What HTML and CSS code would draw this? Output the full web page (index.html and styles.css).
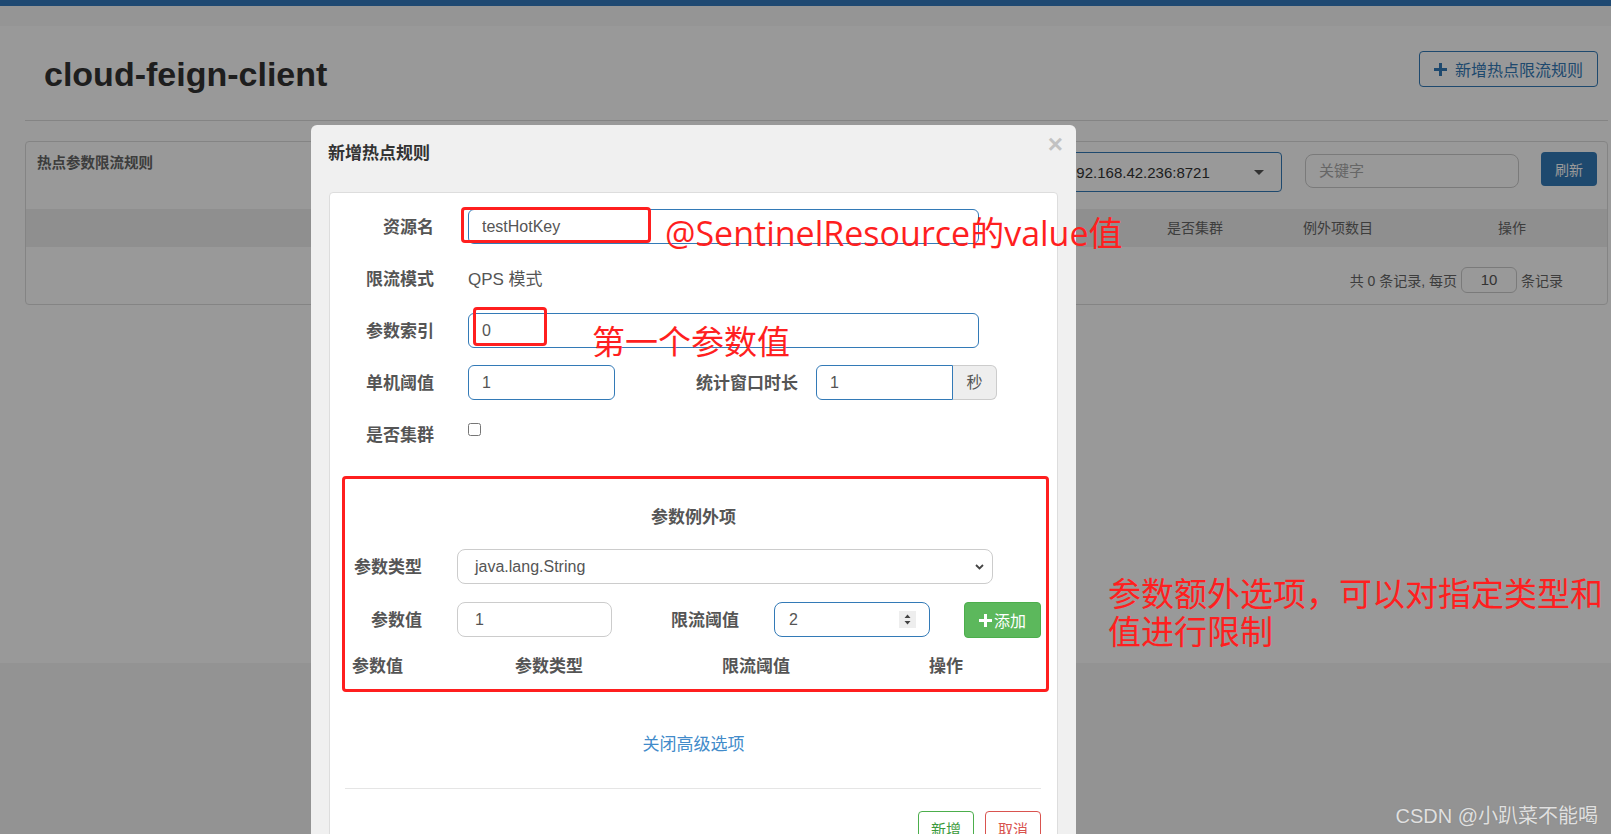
FILE: index.html
```html
<!DOCTYPE html>
<html lang="zh-CN">
<head>
    <meta charset="UTF-8">
    <title>热点参数限流规则</title>
    <link rel="stylesheet" href="styles.css">
</head>
<body>
    <div class="topbar"></div>
    <div class="subbar"></div>

    <div class="main">
        <div class="page-header">
            <h1>cloud-feign-client</h1>
            <button class="btn-add-rule">
                <svg class="icon-plus" viewBox="0 0 13 13"><path d="M5 0h3v5h5v3H8v5H5V8H0V5h5z"/></svg>
                新增热点限流规则
            </button>
        </div>

        <div class="card">
            <div class="card-head">
                <span class="card-title">热点参数限流规则</span>
                <div class="tools">
                    <div class="machine-select">
                        <span>192.168.42.236:8721</span>
                        <span class="caret"></span>
                    </div>
                    <div class="keyword">关键字</div>
                    <button class="btn-refresh">刷新</button>
                </div>
            </div>
            <div class="table-head">
                <span></span>
                <span>是否集群</span>
                <span>例外项数目</span>
                <span>操作</span>
            </div>
            <div class="pager">
                共 0 条记录, 每页 <span class="page-size">10</span> 条记录
            </div>
        </div>
    </div>
    <div class="footer"></div>

    <div class="backdrop"></div>

    <div class="modal">
        <div class="modal-header">
            <span class="modal-title">新增热点规则</span>
            <span class="close">×</span>
        </div>
        <div class="modal-body">
            <div class="form-row">
                <label class="form-label">资源名</label>
                <input class="form-input wide" value="testHotKey">
            </div>
            <div class="form-row">
                <label class="form-label">限流模式</label>
                <span class="form-text">QPS 模式</span>
            </div>
            <div class="form-row">
                <label class="form-label">参数索引</label>
                <input class="form-input wide" value="0">
            </div>
            <div class="form-row">
                <label class="form-label">单机阈值</label>
                <input class="form-input short" value="1">
                <label class="form-label inline">统计窗口时长</label>
                <div class="input-group">
                    <input class="form-input" value="1">
                    <span class="addon">秒</span>
                </div>
            </div>
            <div class="form-row last">
                <label class="form-label">是否集群</label>
                <input type="checkbox" class="check">
            </div>

            <div class="exception">
                <div class="exception-title">参数例外项</div>
                <div class="ex-row">
                    <label class="ex-label">参数类型</label>
                    <div class="ex-select">
                        <span>java.lang.String</span>
                        <svg width="9" height="6" viewBox="0 0 9 6"><path d="M1 1l3.5 3.5L8 1" fill="none" stroke="#444" stroke-width="1.8"/></svg>
                    </div>
                </div>
                <div class="ex-row">
                    <label class="ex-label">参数值</label>
                    <input class="ex-input" value="1">
                    <label class="ex-label second">限流阈值</label>
                    <div class="number-input">
                        <span>2</span>
                        <svg class="spinner" viewBox="0 0 17 17"><path d="M8.5 3.5l3 3.5h-6zM5.5 10h6l-3 3.5z" fill="#444"/></svg>
                    </div>
                    <button class="btn-add">
                        <svg class="icon-plus" viewBox="0 0 13 13"><path d="M5 0h3v5h5v3H8v5H5V8H0V5h5z"/></svg>添加
                    </button>
                </div>
                <div class="ex-table-head">
                    <span>参数值</span>
                    <span>参数类型</span>
                    <span>限流阈值</span>
                    <span>操作</span>
                </div>
            </div>

            <div class="toggle-advanced">关闭高级选项</div>

            <div class="modal-footer">
                <button class="btn-save">新增</button>
                <button class="btn-cancel">取消</button>
            </div>
        </div>
    </div>

    <!-- 截图上的红色标注 -->
    <div class="mark mark-resource"></div>
    <div class="mark mark-index"></div>
    <div class="mark mark-exception"></div>
    <div class="note note-resource">@SentinelResource的value值</div>
    <div class="note note-index">第一个参数值</div>
    <div class="note note-exception">
        <div>参数额外选项，可以对指定类型和</div>
        <div>值进行限制</div>
    </div>
    <div class="watermark">CSDN @小趴菜不能喝</div>
</body>
</html>
```

FILE: styles.css
```css
* {
    box-sizing: border-box;
}

html, body {
    margin: 0;
    height: 100%;
}

body {
    font-family: "Liberation Sans", "Noto Sans CJK SC", sans-serif;
    font-size: 14px;
    color: #333;
    background: #f5f5f5;
    position: relative;
    overflow: hidden;
    display: flex;
    flex-direction: column;
}

input, button {
    font-family: inherit;
}

.topbar {
    height: 6px;
    flex-shrink: 0;
    background: #347bbe;
}

.subbar {
    height: 20px;
    flex-shrink: 0;
    background: #f8f8f8;
}

.main {
    height: 637px;
    flex-shrink: 0;
    background: #fff;
    padding: 0 3px 0 25px;
}

.footer {
    flex: 1;
    background: #f5f5f5;
}

/* 页面头部 */
.page-header {
    display: flex;
    justify-content: space-between;
    align-items: flex-start;
    height: 95px;
    padding: 25px 10px 0 19px;
    border-bottom: 1px solid #ddd;
}

h1 {
    margin: 3px 0 0;
    font-size: 34px;
    line-height: 40px;
    font-weight: bold;
    color: #333;
}

.btn-add-rule {
    display: flex;
    align-items: center;
    gap: 8px;
    height: 36px;
    padding: 0 14px;
    background: #fff;
    border: 1px solid #337ab7;
    border-radius: 4px;
    color: #337ab7;
    font-size: 16px;
}

.icon-plus {
    width: 13px;
    height: 13px;
    fill: currentColor;
}

/* 规则列表卡片 */
.card {
    margin-top: 20px;
    height: 164px;
    border: 1px solid #ddd;
    border-radius: 4px;
}

.card-head {
    display: flex;
    justify-content: space-between;
    height: 67px;
    padding: 10px 10px 0 11px;
}

.card-title {
    margin-top: 1px;
    font-size: 14.5px;
    line-height: 20px;
    font-weight: bold;
    color: #666;
}

.tools {
    display: flex;
    align-items: flex-start;
}

.machine-select {
    display: flex;
    justify-content: space-between;
    align-items: center;
    width: 226px;
    height: 40px;
    padding: 0 17px 0 11px;
    border: 1px solid #337ab7;
    border-radius: 4px;
    font-size: 15px;
    color: #333;
}

.caret {
    border-top: 5px solid #555;
    border-left: 5px solid transparent;
    border-right: 5px solid transparent;
}

.keyword {
    width: 214px;
    height: 34px;
    margin: 2px 0 0 23px;
    padding-left: 13px;
    border: 1px solid #ccc;
    border-radius: 8px;
    font-size: 15px;
    line-height: 32px;
    color: #aaa;
}

.btn-refresh {
    width: 56px;
    height: 34px;
    margin-left: 22px;
    background: #337ab7;
    border: none;
    border-radius: 4px;
    color: #fff;
    font-size: 14px;
}

.table-head {
    display: grid;
    grid-template-columns: 1133px 136px 195px 1fr;
    height: 38px;
    background: #eee;
    line-height: 38px;
    color: #666;
}

.table-head span {
    padding-left: 8px;
}

.pager {
    display: flex;
    justify-content: flex-end;
    align-items: center;
    padding: 20px 44px 0 0;
    color: #666;
}

.page-size {
    width: 56px;
    height: 26px;
    margin: 0 4px;
    border: 1px solid #ccc;
    border-radius: 6px;
    text-align: center;
    font-size: 15px;
    line-height: 24px;
    color: #555;
}

.backdrop {
    position: absolute;
    inset: 0;
    z-index: 10;
    background: rgba(0, 0, 0, 0.4);
}

/* 弹窗 */
.modal {
    position: absolute;
    left: 311px;
    top: 125px;
    z-index: 20;
    width: 765px;
    height: 740px;
    background: #f0f0f0;
    border-radius: 6px;
}

.modal-header {
    display: flex;
    justify-content: space-between;
    align-items: flex-start;
    height: 67px;
    padding: 17px 13px 0 17px;
}

.modal-title {
    font-size: 17px;
    line-height: 24px;
    font-weight: bold;
    color: #333;
}

.close {
    margin-top: -11px;
    font-size: 26px;
    line-height: 26px;
    font-weight: bold;
    color: #c2c2c2;
}

.modal-body {
    height: 673px;
    margin: 0 18px;
    padding-top: 16px;
    background: #fff;
    border: 1px solid #ddd;
    border-radius: 4px;
}

.form-row {
    display: flex;
    align-items: flex-start;
    height: 35px;
    margin-bottom: 17px;
}

.form-label {
    width: 104px;
    margin-right: 34px;
    padding-top: 7px;
    text-align: right;
    font-size: 17px;
    line-height: 24px;
    font-weight: bold;
    color: #555;
}

.form-label.inline {
    width: 183px;
    margin-right: 18px;
}

.form-text {
    padding-top: 7px;
    font-size: 17px;
    line-height: 24px;
    color: #555;
}

.form-input {
    height: 35px;
    padding: 0 13px;
    border: 1px solid #337ab7;
    border-radius: 6px;
    font-size: 16px;
    color: #555;
    outline: none;
}

.form-input.wide {
    width: 511px;
}

.form-input.short {
    width: 147px;
}

.input-group {
    display: flex;
}

.input-group .form-input {
    width: 137px;
    border-radius: 6px 0 0 6px;
}

.addon {
    width: 44px;
    height: 35px;
    background: #eee;
    border: 1px solid #ccc;
    border-left: none;
    border-radius: 0 6px 6px 0;
    text-align: center;
    font-size: 16px;
    line-height: 33px;
    color: #555;
}

.check {
    width: 13px;
    height: 13px;
    margin: 6px 0 0 0;
}

.form-row.last {
    margin-bottom: 0;
}

/* 参数例外项 */
.exception {
    padding-top: 54px;
}

.exception-title {
    margin-bottom: 19px;
    text-align: center;
    font-size: 17px;
    line-height: 24px;
    font-weight: bold;
    color: #555;
}

.ex-row {
    display: flex;
    align-items: flex-start;
    height: 35px;
    margin-bottom: 18px;
}

.ex-label {
    width: 92px;
    margin-right: 35px;
    padding-top: 7px;
    text-align: right;
    font-size: 17px;
    line-height: 24px;
    font-weight: bold;
    color: #555;
}

.ex-label.second {
    width: 127px;
}

.ex-select {
    display: flex;
    justify-content: space-between;
    align-items: center;
    width: 536px;
    height: 35px;
    padding: 0 8px 0 17px;
    border: 1px solid #ccc;
    border-radius: 8px;
    font-size: 16px;
    color: #555;
}

.ex-input {
    width: 155px;
    height: 35px;
    padding: 0 17px;
    border: 1px solid #ccc;
    border-radius: 8px;
    font-size: 16px;
    color: #555;
    outline: none;
}

.number-input {
    display: flex;
    justify-content: space-between;
    align-items: center;
    width: 156px;
    height: 35px;
    padding: 0 13px 0 14px;
    border: 1px solid #337ab7;
    border-radius: 8px;
    font-size: 16px;
    color: #555;
}

.spinner {
    width: 17px;
    height: 17px;
    background: #eee;
}

.btn-add {
    display: flex;
    align-items: center;
    justify-content: center;
    gap: 2px;
    width: 77px;
    height: 36px;
    margin-left: 34px;
    background: #5cb85c;
    border: 1px solid #4cae4c;
    border-radius: 4px;
    color: #fff;
    font-size: 16px;
}

.ex-table-head {
    display: grid;
    grid-template-columns: 163px 207px 207px 119px;
    margin: 6px 0 0 14px;
    font-size: 17px;
    line-height: 24px;
    font-weight: bold;
    color: #555;
}

.ex-table-head span {
    padding-left: 8px;
}

.toggle-advanced {
    margin-top: 54px;
    text-align: center;
    font-size: 17px;
    line-height: 24px;
    color: #428bca;
}

.modal-footer {
    display: flex;
    justify-content: flex-end;
    gap: 11px;
    margin: 31px 16px 0 15px;
    padding-top: 22px;
    border-top: 1px solid #e5e5e5;
}

.btn-save,
.btn-cancel {
    width: 56px;
    height: 34px;
    background: #fff;
    border-radius: 4px;
    font-size: 15px;
}

.btn-save {
    border: 1px solid #4cae4c;
    color: #3c9a3c;
}

.btn-cancel {
    border: 1px solid #d9534f;
    color: #d9534f;
}

/* 红色标注 */
.mark {
    position: absolute;
    z-index: 30;
    border: 3px solid #ff1f1f;
    border-radius: 4px;
}

.mark-resource {
    left: 461px;
    top: 207px;
    width: 190px;
    height: 36px;
}

.mark-index {
    left: 473px;
    top: 307px;
    width: 74px;
    height: 39px;
}

.mark-exception {
    left: 342px;
    top: 476px;
    width: 707px;
    height: 216px;
}

.note {
    position: absolute;
    z-index: 30;
    font-family: "Open Sans", "Noto Sans CJK SC", sans-serif;
    font-size: 33px;
    line-height: 40px;
    color: #ff1f1f;
    white-space: nowrap;
}

.note-resource {
    left: 665px;
    top: 213px;
    font-size: 34px;
}

.note-index {
    left: 592px;
    top: 322px;
}

.note-exception {
    left: 1108px;
    top: 575px;
    line-height: 38px;
}

.watermark {
    position: absolute;
    z-index: 30;
    right: 13px;
    top: 804px;
    font-size: 20px;
    line-height: 24px;
    color: #e0e0e0;
    text-shadow: 0 0 1px #777;
    white-space: nowrap;
}
```
